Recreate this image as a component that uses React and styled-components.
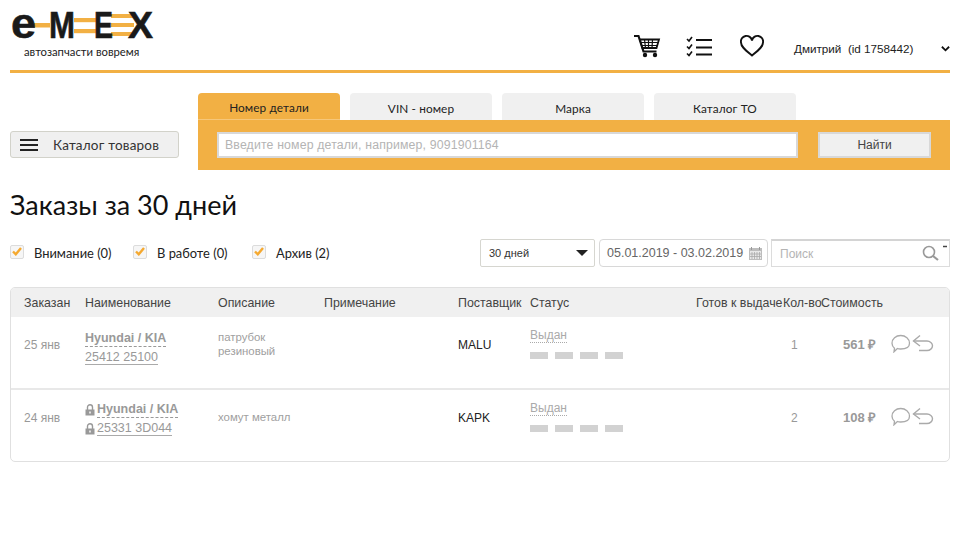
import React from "react";
import styled, { createGlobalStyle } from "styled-components";

const GlobalStyle = createGlobalStyle`
  html, body {
    margin: 0;
    padding: 0;
    background: #fff;
    font-family: "Liberation Sans", Arial, sans-serif;
    color: #222;
  }
  * { box-sizing: border-box; }
`;

const ORANGE = "#f2b044";
const HUMANIST = `Lato, "Open Sans", sans-serif`;

const Page = styled.div`
  width: 960px;
  height: 540px;
  padding: 0 10px;
  overflow: hidden;
`;

const Header = styled.header`
  height: 73px;
  border-bottom: 3px solid ${ORANGE};
  display: flex;
  justify-content: space-between;
`;

const LogoBox = styled.div`
  width: 150px;
`;

const LogoMark = styled.svg`
  display: block;
  width: 144px;
  height: 46px;
`;

const LogoText = styled.div`
  font-family: ${HUMANIST};
  font-size: 11.3px;
  line-height: 13px;
  color: #222;
  margin: -1px 0 0 14px;
  white-space: nowrap;
`;

const HeaderRight = styled.div`
  display: flex;
  align-items: flex-start;
  padding-top: 33px;
`;

const IconSlot = styled.div`
  width: ${(p) => p.$w}px;
  height: 26px;
`;

const UserName = styled.div`
  font-size: 11.7px;
  color: #222;
  margin-top: 9px;
  width: 147px;
  white-space: pre;
`;

const Chevron = styled.svg`
  width: 9px;
  height: 8px;
  margin-top: 12px;
`;

const SearchRow = styled.div`
  display: flex;
  align-items: flex-end;
  margin-top: 20px;
`;

const CatalogButton = styled.button`
  width: 169px;
  height: 27px;
  margin-bottom: 12px;
  margin-right: 19px;
  padding: 0 0 0 9px;
  display: flex;
  align-items: center;
  gap: 15px;
  background: #f0f0f0;
  border: 1px solid #d2d2ca;
  border-radius: 3px;
  font-family: ${HUMANIST};
  font-size: 13.5px;
  letter-spacing: 0.2px;
  color: #333;
`;

const Burger = styled.span`
  width: 18px;
  height: 12px;
  border-top: 2px solid #222;
  border-bottom: 2px solid #222;
  position: relative;
  &::after {
    content: "";
    position: absolute;
    left: 0;
    right: 0;
    top: 3px;
    height: 2px;
    background: #222;
  }
`;

const SearchBox = styled.div`
  flex: 1;
`;

const Tabs = styled.div`
  display: flex;
  gap: 10px;
`;

const Tab = styled.div`
  width: 142px;
  height: 27px;
  border-radius: 4px 4px 0 0;
  background: ${(p) => (p.$active ? ORANGE : "#f0f0f0")};
  border-bottom: ${(p) => (p.$active ? "1px solid #f6c77a" : "none")};
  font-family: ${HUMANIST};
  font-size: 11.8px;
  letter-spacing: 0.1px;
  color: #222;
  display: flex;
  align-items: center;
  justify-content: center;
  padding-top: 3px;
`;

const SearchPanel = styled.div`
  height: 50px;
  background: ${ORANGE};
  padding: 12px 19px;
  display: flex;
  gap: 20px;
`;

const SearchInput = styled.div`
  width: 581px;
  height: 26px;
  background: #fff;
  border: 2px solid #d8d8d8;
  padding-left: 6px;
  font-size: 12.3px;
  line-height: 22px;
  color: #b4b4b4;
  letter-spacing: 0.15px;
`;

const FindButton = styled.button`
  width: 113px;
  height: 26px;
  background: #f0f0f0;
  border: 2px solid #d8d8d8;
  font-family: "Liberation Sans", Arial, sans-serif;
  font-size: 12px;
  color: #444;
  padding: 0;
`;

const Title = styled.h1`
  margin: 18px 0 0;
  height: 36px;
  font-family: ${HUMANIST};
  font-weight: 400;
  font-size: 27px;
  line-height: 34px;
  color: #111;
`;

const FilterRow = styled.div`
  display: flex;
  justify-content: space-between;
  align-items: center;
  margin-top: 14px;
  height: 30px;
`;

const Checks = styled.div`
  display: flex;
`;

const CheckLabel = styled.label`
  width: ${(p) => p.$w}px;
  display: flex;
  align-items: center;
  gap: 10px;
  font-family: ${HUMANIST};
  font-size: 12.9px;
  color: #222;
  white-space: nowrap;
`;

const CheckBox = styled.span`
  width: 14px;
  height: 14px;
  border: 1px solid #dcdcdc;
  border-radius: 2px;
  background: #f6f6f6;
  display: flex;
  align-items: center;
  justify-content: center;
  margin-top: -3px;
`;

const Controls = styled.div`
  display: flex;
  gap: 3px;
`;

const Select = styled.div`
  width: 115px;
  height: 28px;
  border: 1px solid #d6d6d0;
  border-radius: 2px;
  font-size: 11px;
  color: #333;
  padding: 0 6px 0 8px;
  margin-right: 1px;
  display: flex;
  align-items: center;
  justify-content: space-between;
  &::after {
    content: "";
    border-left: 6px solid transparent;
    border-right: 6px solid transparent;
    border-top: 6px solid #222;
  }
`;

const DateField = styled.div`
  width: 169px;
  height: 28px;
  border: 1px solid #d8d8d8;
  border-radius: 4px;
  font-size: 12.5px;
  color: #666;
  padding: 0 4px 0 7px;
  display: flex;
  align-items: center;
  justify-content: space-between;
  white-space: nowrap;
`;

const FindField = styled.div`
  width: 179px;
  height: 28px;
  border: 1px solid #dcdcdc;
  border-top: 2px solid #d4d4d4;
  font-size: 12px;
  color: #b4b4b4;
  padding: 0 0 0 8px;
  display: flex;
  align-items: center;
  justify-content: space-between;
`;

const TableBox = styled.div`
  margin-top: 19px;
  border: 1px solid #e0e0e0;
  border-radius: 5px;
  overflow: hidden;
`;

const COLUMNS = "61px 133px 106px 134px 72px 166px 87px 38px 70px 1fr";

const HeadRow = styled.div`
  display: grid;
  grid-template-columns: ${COLUMNS};
  height: 29px;
  padding-left: 13px;
  background: #f0f0f0;
  font-size: 12.4px;
  line-height: 30px;
  color: #444;
  white-space: nowrap;
`;

const Row = styled.div`
  display: grid;
  grid-template-columns: ${COLUMNS};
  height: ${(p) => (p.$last ? 71 : 73)}px;
  padding-left: 13px;
  border-bottom: ${(p) => (p.$last ? "none" : "2px solid #e8e8e8")};
  color: #999;
  font-size: 12px;
`;

const Cell = styled.div`
  padding-top: ${(p) => p.$top ?? 21}px;
  white-space: nowrap;
`;

const BrandLine = styled.div`
  display: flex;
  align-items: center;
  gap: 2px;
  height: 19px;
`;

const Brand = styled.span`
  font-weight: 700;
  font-size: 12.5px;
  line-height: 15px;
  color: #999;
  border-bottom: 1px dashed #999;
`;

const PartNumber = styled.span`
  font-size: 12.5px;
  line-height: 13px;
  color: #999;
  border-bottom: 1px solid #aaa;
`;

const DescriptionCell = styled.div`
  height: 41px;
  padding-top: 13px;
  display: flex;
  align-items: center;
`;

const Description = styled.div`
  font-size: 11.4px;
  line-height: 14px;
  color: #a0a0a0;
  white-space: pre-line;
`;

const Supplier = styled(Cell)`
  color: #222;
  font-size: 12px;
`;

const StatusLink = styled.span`
  font-size: 12px;
  line-height: 14px;
  color: #aaa;
  border-bottom: 1px dotted #aaa;
`;

const Dashes = styled.div`
  display: flex;
  gap: 7px;
  margin-top: 10px;
`;

const Dash = styled.span`
  width: 18px;
  height: 7px;
  background: #d2d2d2;
`;

const Qty = styled(Cell)`
  padding-left: 8px;
`;

const Price = styled(Cell)`
  font-weight: 700;
  font-size: 13px;
  color: #999;
  padding-left: 22px;
  padding-top: 18px;
`;

const Actions = styled.div`
  display: flex;
  gap: 1px;
  padding-top: 17px;
`;

const CartIcon = () => (
  <svg width="28" height="26" viewBox="0 0 28 26" fill="none" stroke="#111">
    <path d="M1 3h4.500l5 15.500h13" strokeWidth="2.200" />
    <path d="M7 6.500h19l-2.500 8.500H9.500z" fill="#fff" strokeWidth="1.800" />
    <path d="M11.500 6.500l1 8.500M15.500 6.500v8.500M19.500 6.500l-.5 8.500M8 9.500h17.500M9 12.500h15.500" strokeWidth="1.200" />
    <circle cx="12" cy="22" r="2.200" fill="#111" stroke="none" />
    <circle cx="22" cy="22" r="2.200" fill="#111" stroke="none" />
  </svg>
);

const ListIcon = () => (
  <svg width="28" height="24" viewBox="0 0 28 24" fill="none" stroke="#111" strokeWidth="2.200">
    <path d="M1 6l2 2 3-4M1 13.500l2 2 3-4M1 20.500l2 2 3-4" strokeWidth="1.600" />
    <path d="M10 7h16M10 14.500h16M10 21.500h16" />
  </svg>
);

const HeartIcon = () => (
  <svg width="24" height="24" viewBox="0 0 24 24" fill="none" stroke="#111" strokeWidth="1.900">
    <path d="M12 22.500C6 17.500 1 14 1 9.500A5.500 5.500 0 0 1 12 7.500a5.500 5.500 0 0 1 11 2c0 4.500-5 8-11 13z" />
  </svg>
);

const CheckMark = () => (
  <svg width="10" height="9" viewBox="0 0 10 9" fill="none" stroke="#f5a930" strokeWidth="2.400">
    <path d="M1 4.500l2.800 2.800L9 1" />
  </svg>
);

const CalendarIcon = () => (
  <svg width="15" height="15" viewBox="0 0 15 15">
    <path d="M1 2h13v12H1z" fill="#bdbdbd" />
    <path d="M2 5h11v8H2z" fill="#e8e8e8" />
    <path d="M3 1h1v3H3zM11 1h1v3h-1z" fill="#999" />
    <path d="M4 6v7M6.500 6v7M9 6v7M11.500 6v7M2 8h11M2 10.500h11" stroke="#aaa" strokeWidth="0.8" />
  </svg>
);

const MagnifierIcon = () => (
  <svg width="27" height="20" viewBox="0 0 27 20" fill="none" stroke="#999" strokeWidth="1.600">
    <circle cx="7" cy="8" r="5.500" />
    <path d="M11 12l5 4" strokeWidth="2.200" />
    <path d="M21 2.500h4" stroke="#444" strokeWidth="1.500" />
  </svg>
);

const LockIcon = () => (
  <svg width="10" height="12" viewBox="0 0 10 12" fill="none">
    <path d="M2.500 6V3.200a2.500 2.500 0 0 1 5 0V6" stroke="#999" strokeWidth="1.400" />
    <path d="M.5 5.500h9v6h-9z" fill="#999" />
    <path d="M4.300 7.500h1.400v2H4.300z" fill="#fff" />
  </svg>
);

const CommentIcon = () => (
  <svg width="20" height="19" viewBox="0 0 20 19" fill="none" stroke="#aaa" strokeWidth="1.300">
    <path d="M3.500 14.200C2 13 1 11.300 1 9.200 1 5 4.800 1.500 9.700 1.500S18.500 5 18.500 9.200 14.700 15 9.700 15c-1.200 0-2.300-.1-3.300-.5L3 17.800z" />
  </svg>
);

const ReturnIcon = () => (
  <svg width="22" height="19" viewBox="0 0 22 19" fill="none" stroke="#aaa" strokeWidth="1.400">
    <path d="M8 1.500L1.500 7 8 12" />
    <path d="M1.500 7H15c3 0 5.500 2.200 5.500 4.800S18 16.500 15 16.500H7" />
  </svg>
);

const Logo = () => (
  <LogoMark viewBox="0 0 144 46">
    <g fill={ORANGE}>
      <rect x="24" y="23" width="16" height="4.500" />
      <rect x="64" y="18" width="22" height="4.200" />
      <rect x="64" y="29" width="22" height="4.200" />
      <rect x="101" y="14" width="23" height="4" />
      <rect x="101" y="23" width="23" height="4" />
      <rect x="101" y="32" width="23" height="4" />
    </g>
    <g fill="#1a1a1a" stroke="#1a1a1a" strokeWidth="0.6" fontFamily="'Liberation Sans', Arial, sans-serif" fontWeight="700">
      <text x="1" y="38" fontSize="42" textLength="25" lengthAdjust="spacingAndGlyphs">e</text>
      <text x="39" y="38" fontSize="36" textLength="26" lengthAdjust="spacingAndGlyphs">M</text>
      <text x="84" y="38" fontSize="36" textLength="19" lengthAdjust="spacingAndGlyphs">E</text>
      <text x="118" y="38" fontSize="36" textLength="25" lengthAdjust="spacingAndGlyphs">X</text>
    </g>
  </LogoMark>
);

const orders = [
  { date: "25 янв", brand: "Hyundai / KIA", part: "25412 25100", desc: "патрубок\nрезиновый", supplier: "MALU", qty: 1, price: "561 ₽", locked: false },
  { date: "24 янв", brand: "Hyundai / KIA", part: "25331 3D044", desc: "хомут металл", supplier: "KAPK", qty: 2, price: "108 ₽", locked: true },
];

const heads = ["Заказан", "Наименование", "Описание", "Примечание", "Поставщик", "Статус", "Готов к выдаче", "Кол-во", "Стоимость", ""];

const filters = [
  { label: "Внимание (0)", width: 123 },
  { label: "В работе (0)", width: 119 },
  { label: "Архив (2)", width: 90 },
];

export default function App() {
  return (
    <Page>
      <GlobalStyle />
      <Header>
        <LogoBox>
          <Logo />
          <LogoText>автозапчасти вовремя</LogoText>
        </LogoBox>
        <HeaderRight>
          <IconSlot $w={53}><CartIcon /></IconSlot>
          <IconSlot $w={54}><ListIcon /></IconSlot>
          <IconSlot $w={54}><HeartIcon /></IconSlot>
          <UserName>Дмитрий  (id 1758442)</UserName>
          <Chevron viewBox="0 0 10 8" fill="none" stroke="#111" strokeWidth="2">
            <path d="M1 1.500l4 4 4-4" />
          </Chevron>
        </HeaderRight>
      </Header>

      <SearchRow>
        <CatalogButton>
          <Burger />
          Каталог товаров
        </CatalogButton>
        <SearchBox>
          <Tabs>
            <Tab $active>Номер детали</Tab>
            <Tab>VIN - номер</Tab>
            <Tab>Марка</Tab>
            <Tab>Каталог ТО</Tab>
          </Tabs>
          <SearchPanel>
            <SearchInput>Введите номер детали, например, 9091901164</SearchInput>
            <FindButton>Найти</FindButton>
          </SearchPanel>
        </SearchBox>
      </SearchRow>

      <Title>Заказы за 30 дней</Title>

      <FilterRow>
        <Checks>
          {filters.map((f) => (
            <CheckLabel key={f.label} $w={f.width}>
              <CheckBox><CheckMark /></CheckBox>
              {f.label}
            </CheckLabel>
          ))}
        </Checks>
        <Controls>
          <Select>30 дней</Select>
          <DateField>05.01.2019 - 03.02.2019<CalendarIcon /></DateField>
          <FindField>Поиск<MagnifierIcon /></FindField>
        </Controls>
      </FilterRow>

      <TableBox>
        <HeadRow>
          {heads.map((h, i) => <div key={i}>{h}</div>)}
        </HeadRow>
        {orders.map((o, i) => (
          <Row key={o.part} $last={i === orders.length - 1}>
            <Cell>{o.date}</Cell>
            <Cell $top={o.locked ? 10 : 12}>
              <BrandLine>
                {o.locked && <LockIcon />}
                <Brand>{o.brand}</Brand>
              </BrandLine>
              <BrandLine>
                {o.locked && <LockIcon />}
                <PartNumber>{o.part}</PartNumber>
              </BrandLine>
            </Cell>
            <DescriptionCell><Description>{o.desc}</Description></DescriptionCell>
            <Cell />
            <Supplier>{o.supplier}</Supplier>
            <Cell $top={11}>
              <StatusLink>Выдан</StatusLink>
              <Dashes>
                <Dash /><Dash /><Dash /><Dash />
              </Dashes>
            </Cell>
            <Cell />
            <Qty>{o.qty}</Qty>
            <Price>{o.price}</Price>
            <Actions><CommentIcon /><ReturnIcon /></Actions>
          </Row>
        ))}
      </TableBox>
    </Page>
  );
}
